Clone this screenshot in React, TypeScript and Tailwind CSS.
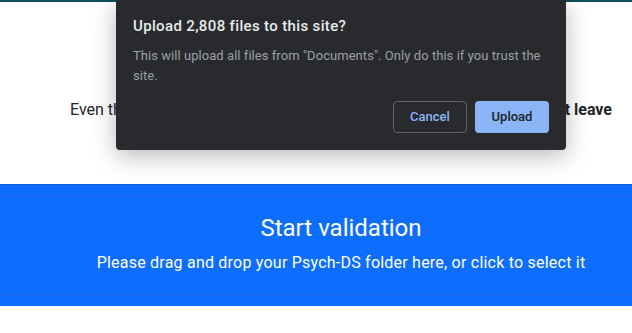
export default function App() {
  return (
    <div className="relative h-[333px] w-[632px] overflow-hidden bg-white font-['Roboto',sans-serif]">
      <div className="h-[2px] bg-[#0b4f5d]" />

      <div className="pl-[50px]">
        <div className="flex h-[182px] items-start pt-[97px]">
          <div className="mx-auto flex w-[542px] justify-between overflow-hidden whitespace-nowrap text-[16px] leading-[22px] text-[#212529]">
            <span>Even though this tool runs in your browser,</span>
            <span className="font-bold">not leave</span>
          </div>
        </div>
      </div>

      <div className="h-[122px] border-t border-[#0b5ed7] bg-[#0d6efd] pt-[10px]">
        <div className="h-[101px] border-y border-[#2a5cec] pl-[50px]">
          <div className="flex flex-col items-center pt-[17px] text-white">
            <h2 className="text-[24px] leading-[30px] font-normal">Start validation</h2>
            <p className="mt-[9px] text-[16px] leading-[22px] tracking-[0.22px]">
              Please drag and drop your Psych-DS folder here, or click to select it
            </p>
          </div>
        </div>
      </div>

      {/* browser permission prompt */}
      <div className="absolute left-[116px] top-0 w-[450px] rounded-b-[4px] bg-[#292a2d] px-[17px] pb-[17px] pt-[16px] shadow-[0_6px_24px_rgba(0,0,0,0.28)]">
        <h1 className="text-[15px] leading-[20px] font-medium tracking-[0.35px] text-[#e8eaed]">
          Upload 2,808 files to this site?
        </h1>
        <p className="mt-[10px] text-[13px] leading-[20px] tracking-[0.05px] text-[#9aa0a6]">
          This will upload all files from "Documents". Only do this if you trust the site.
        </p>
        <div className="mt-[15px] flex justify-end gap-[8px]">
          <button className="h-[32px] w-[74px] rounded-[4px] border border-[#5f6368] text-[13px] font-medium text-[#8ab4f8]">
            Cancel
          </button>
          <button className="h-[32px] w-[74px] rounded-[4px] bg-[#8ab4f8] text-[13px] font-medium text-[#202124]">
            Upload
          </button>
        </div>
      </div>
    </div>
  );
}
